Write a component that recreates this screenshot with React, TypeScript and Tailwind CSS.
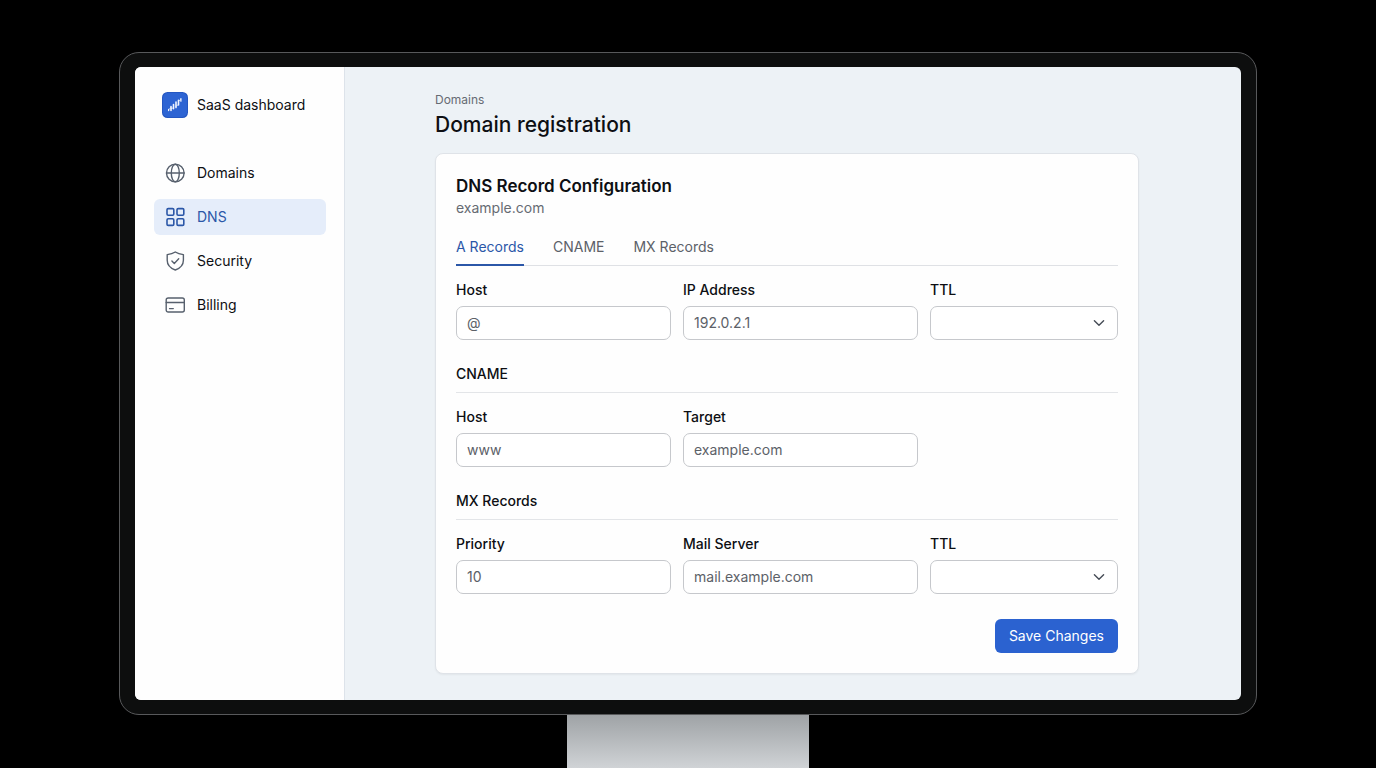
import React from "react";
import { clsx } from "clsx";

const iconProps = {
  width: 20,
  height: 20,
  viewBox: "0 0 20 20",
  fill: "none",
  stroke: "currentColor",
  strokeLinecap: "round",
  strokeLinejoin: "round",
  "aria-hidden": true,
} as const;

const GlobeIcon = () => (
  <svg {...iconProps} strokeWidth={1.4}>
    <circle cx="10.3" cy="10" r="8.8" />
    <ellipse cx="10.3" cy="10" rx="4" ry="8.8" />
    <path d="M1.5 10h17.6" />
  </svg>
);

const GridIcon = () => (
  <svg {...iconProps} strokeWidth={1.6}>
    <rect x="2" y="1.6" width="6.8" height="6.6" rx="1.2" />
    <rect x="12" y="1.6" width="6.8" height="6.6" rx="1.2" />
    <rect x="2" y="11.8" width="6.8" height="6.6" rx="1.2" />
    <rect x="12" y="11.8" width="6.8" height="6.6" rx="1.2" />
  </svg>
);

const ShieldIcon = () => (
  <svg {...iconProps} strokeWidth={1.4}>
    <path d="M10.3 1C8.1 2.5 5.2 3.3 2.2 3.6v5.6c0 4.8 3 7.9 8.1 9.8 5.1-1.9 8.1-5 8.1-9.8V3.6C15.4 3.3 12.5 2.5 10.3 1Z" />
    <path d="m6.9 10 2.4 2.4 4.4-4.6" />
  </svg>
);

const CardIcon = () => (
  <svg {...iconProps} strokeWidth={1.4}>
    <rect x="1.2" y="3" width="18.1" height="14" rx="2" />
    <path d="M1.2 7.5h18.1" />
    <path d="M4.4 13.6h4" strokeWidth={1.1} />
  </svg>
);

const LogoIcon = () => (
  <svg width="26" height="26" viewBox="0 0 26 26" fill="none" aria-hidden="true">
    <rect width="26" height="26" rx="5.5" fill="#2457c2" />
    <rect x="1" y="1" width="24" height="24" rx="4.8" fill="#2d64d3" />
    <g stroke="#f2f6ff" strokeLinecap="round">
      <path d="M6.6 17.4v1.2M18.9 6.6v2.6" strokeWidth="1.3" />
      <path d="M9 14.6v3.8M11.5 12.6v4.2M14 10v5.6M16.5 8.2v4.8" strokeWidth="1.6" />
      <path d="M6.8 17.6 9 15.4M9.2 16.6l2.2-.8M14 14.2l2.4-1.6M16.6 9l2.2-1.4" strokeWidth=".7" />
    </g>
  </svg>
);

const navItems = [
  { label: "Domains", icon: GlobeIcon },
  { label: "DNS", icon: GridIcon, active: true },
  { label: "Security", icon: ShieldIcon },
  { label: "Billing", icon: CardIcon },
];

const tabs = ["A Records", "CNAME", "MX Records"];

const controlClass =
  "block h-[34px] w-full rounded-[7px] border border-[#c6c8cc] bg-white px-2.5 pb-0.5 text-sm text-[#5c6168]";

interface FieldProps {
  id: string;
  label: string;
}

const Label = ({ id, label }: FieldProps) => (
  <label htmlFor={id} className="mb-1.5 block text-sm leading-5 font-medium text-[#0d0f13]">
    {label}
  </label>
);

const TextField = ({ id, label, value }: FieldProps & { value: string }) => (
  <div>
    <Label id={id} label={label} />
    <input id={id} type="text" defaultValue={value} className={controlClass} />
  </div>
);

const SelectField = ({ id, label }: FieldProps) => (
  <div>
    <Label id={id} label={label} />
    <div className="relative">
      <select id={id} defaultValue="" className={clsx(controlClass, "appearance-none")}>
        <option value=""></option>
        <option value="300">300</option>
        <option value="3600">3600</option>
        <option value="86400">86400</option>
      </select>
      <svg
        className="pointer-events-none absolute top-3 right-[13px] text-[#454b55]"
        width="12"
        height="10"
        viewBox="0 0 12 10"
        fill="none"
        stroke="currentColor"
        strokeWidth="1.4"
        strokeLinecap="round"
        strokeLinejoin="round"
        aria-hidden="true">
        <path d="M1.4 2.7 6 7.2l4.6-4.5" />
      </svg>
    </div>
  </div>
);

const FieldRow = ({ children }: { children: React.ReactNode }) => (
  <div className="mt-3.5 grid grid-cols-[215fr_235fr_188fr] gap-3">{children}</div>
);

const SectionTitle = ({ children }: { children: React.ReactNode }) => (
  <h3 className="mt-6 border-b border-[#e3e5e8] pb-2 text-sm leading-5 font-medium text-[#0d0f13]">
    {children}
  </h3>
);

const Sidebar = () => (
  <aside className="w-[210px] shrink-0 border-r border-[#dde3ea] bg-[#fefefe] pt-[25px] pr-[18px] pl-[19px]">
    <div className="flex items-center gap-[9px] pl-2 text-sm text-[#0d0f13]">
      <LogoIcon />
      <span>SaaS dashboard</span>
    </div>
    <nav className="mt-[37px] flex flex-col gap-2">
      {navItems.map(({ label, icon: Icon, active }) => (
        <a
          key={label}
          href="#"
          aria-current={active ? "page" : undefined}
          className={clsx(
            "flex h-9 items-center gap-3 rounded-md pl-[11px] text-sm",
            active ? "bg-[#e5edfa] text-[#2b57a8]" : "text-[#0d0f13]",
          )}>
          <span className={active ? "text-[#2b57a8]" : "text-[#57606d]"}>
            <Icon />
          </span>
          {label}
        </a>
      ))}
    </nav>
  </aside>
);

const DnsCard = () => {
  const [tab, setTab] = React.useState("A Records");

  return (
    <form
      onSubmit={(e) => e.preventDefault()}
      className="mt-3.5 rounded-lg border border-[#dfe3e8] bg-[#fefefe] p-5 shadow-xs">
      <h2 className="text-[17px] leading-6 font-semibold text-[#0d0f13]">
        DNS Record Configuration
      </h2>
      <p className="text-sm leading-5 text-[#666b73]">example.com</p>

      <div role="tablist" className="mt-[19px] flex gap-[29px] border-b border-[#dfe1e5]">
        {tabs.map((name) => (
          <button
            key={name}
            type="button"
            role="tab"
            aria-selected={tab === name}
            onClick={() => setTab(name)}
            className={clsx(
              "-mb-px border-b-2 pb-[7px] text-sm leading-5",
              tab === name ? "border-[#2b57a8] text-[#2b57a8]" : "border-transparent text-[#5c6168]",
            )}>
            {name}
          </button>
        ))}
      </div>

      <FieldRow>
        <TextField id="a-host" label="Host" value="@" />
        <TextField id="a-ip" label="IP Address" value="192.0.2.1" />
        <SelectField id="a-ttl" label="TTL" />
      </FieldRow>

      <SectionTitle>CNAME</SectionTitle>
      <FieldRow>
        <TextField id="cname-host" label="Host" value="www" />
        <TextField id="cname-target" label="Target" value="example.com" />
      </FieldRow>

      <SectionTitle>MX Records</SectionTitle>
      <FieldRow>
        <TextField id="mx-priority" label="Priority" value="10" />
        <TextField id="mx-server" label="Mail Server" value="mail.example.com" />
        <SelectField id="mx-ttl" label="TTL" />
      </FieldRow>

      <div className="mt-[25px] flex justify-end">
        <button
          type="submit"
          className="h-[34px] rounded-md bg-[#2b62d0] px-3.5 text-sm text-white">
          Save Changes
        </button>
      </div>
    </form>
  );
};

export default function App() {
  return (
    <div className="flex min-h-screen flex-col bg-black px-[119px] pt-[52px] font-['Inter',sans-serif]">
      <div className="rounded-[20px] border border-[#58595b] bg-[#0d0e0e] px-[15px] py-3.5">
        <div className="flex overflow-hidden rounded-md bg-[#edf2f6]">
          <Sidebar />
          <main className="min-w-0 flex-1 pt-[25px] pr-[102px] pb-[26px] pl-[90px]">
            <p className="text-xs leading-4 text-[#666b73]">Domains</p>
            <h1 className="mt-[3px] text-[21px] leading-7 font-medium text-[#0d0f13]">
              Domain registration
            </h1>
            <DnsCard />
          </main>
        </div>
      </div>
      <div className="w-[242px] flex-1 self-center bg-linear-to-b from-[#9fa3a6] to-[#d0d3d6]" />
    </div>
  );
}
